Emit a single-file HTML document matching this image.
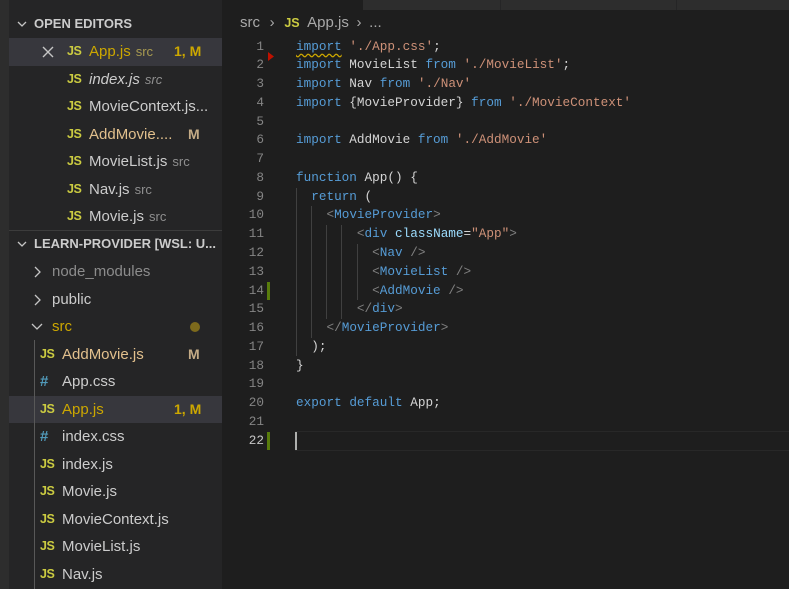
<!DOCTYPE html>
<html><head><meta charset="utf-8"><style>
*{margin:0;padding:0;box-sizing:border-box}
body{width:789px;height:589px;overflow:hidden;background:#1e1e1e;position:relative;font-family:"Liberation Sans",sans-serif}
.strip{position:absolute;left:0;top:0;width:9px;height:589px;background:#2d2d2d}
.side{position:absolute;left:9px;top:0;width:213px;height:589px;background:#252526}
.hdr{position:absolute;left:0;font-weight:bold;font-size:13px;color:#cccccc;height:20px;line-height:20px}
.chev{position:absolute}
.row{position:absolute;left:0;width:213px;height:27.5px;line-height:27.5px;font-size:15px;color:#cccccc;white-space:nowrap}
.sel{background:#37373d}
.js{position:absolute;font-weight:bold;font-size:12.5px;color:#cbcb41;letter-spacing:-0.5px}
.hash{position:absolute;font-weight:bold;font-size:15px;color:#519aba}
.desc{font-size:13px;color:#8f8f8f;margin-left:5px}
.nm{position:absolute}
.badge{position:absolute;font-weight:bold;font-size:14px}
.editor{position:absolute;left:222px;top:0;width:567px;height:589px;background:#1e1e1e}
.tabs{position:absolute;left:141px;top:0;width:426px;height:10px;background:#2d2d2d}
.code{position:absolute;font-family:"Liberation Mono",monospace;font-size:12.7px;white-space:pre;line-height:18.76px}
.ln{color:#858585;text-align:right;width:42px;left:0;top:37.6px}
.src{left:74px;top:37.6px;color:#d4d4d4}
.k{color:#569cd6}.s{color:#ce9178}.v{color:#9cdcfe}.t{color:#808080}.f{color:#dcdcaa}
.g{position:absolute;width:1px;background:#404040}
</style></head><body>
<div class="strip"></div>
<div class="side">
 <svg class="chev" style="left:7px;top:18px" width="12" height="12"><path d="M2 4 L6 8 L10 4" stroke="#c5c5c5" fill="none" stroke-width="1.3"/></svg>
 <div class="hdr" style="left:25px;top:14px">OPEN EDITORS</div>
 <div class="row sel" style="top:38px"><svg style="position:absolute;left:33px;top:8px" width="12" height="12"><path d="M1 1L11 11M11 1L1 11" stroke="#c5c5c5" stroke-width="1.4"/></svg><span class="js" style="left:58px">JS</span><span class="nm" style="left:80px;color:#cca700">App.js<span class="desc" style="color:#a89a50">src</span></span><span class="badge" style="left:165px;color:#cca700">1, M</span></div>
 <div class="row" style="top:65.5px"><span class="js" style="left:58px">JS</span><span class="nm" style="left:80px;font-style:italic">index.js<span class="desc" style="font-style:italic">src</span></span></div>
 <div class="row" style="top:93px"><span class="js" style="left:58px">JS</span><span class="nm" style="left:80px">MovieContext.js...</span></div>
 <div class="row" style="top:120.5px"><span class="js" style="left:58px">JS</span><span class="nm" style="left:80px;color:#e2c08d">AddMovie....</span><span class="badge" style="left:179px;color:#c4ab86">M</span></div>
 <div class="row" style="top:148px"><span class="js" style="left:58px">JS</span><span class="nm" style="left:80px">MovieList.js<span class="desc">src</span></span></div>
 <div class="row" style="top:175.5px"><span class="js" style="left:58px">JS</span><span class="nm" style="left:80px">Nav.js<span class="desc">src</span></span></div>
 <div class="row" style="top:203px"><span class="js" style="left:58px">JS</span><span class="nm" style="left:80px">Movie.js<span class="desc">src</span></span></div>
 <div style="position:absolute;left:0;top:230px;width:213px;height:1px;background:#3c3c3c"></div>
 <svg class="chev" style="left:7px;top:238px" width="12" height="12"><path d="M2 4 L6 8 L10 4" stroke="#c5c5c5" fill="none" stroke-width="1.3"/></svg>
 <div class="hdr" style="left:25px;top:234px">LEARN-PROVIDER [WSL: U...</div>
 <div class="row" style="top:258px"><svg style="position:absolute;left:24px;top:8px" width="10" height="12"><path d="M2 1 L7 6 L2 11" stroke="#c5c5c5" fill="none" stroke-width="1.3"/></svg><span class="nm" style="left:43px;color:#8c8c8c">node_modules</span></div>
 <div class="row" style="top:285.5px"><svg style="position:absolute;left:24px;top:8px" width="10" height="12"><path d="M2 1 L7 6 L2 11" stroke="#c5c5c5" fill="none" stroke-width="1.3"/></svg><span class="nm" style="left:43px">public</span></div>
 <div class="row" style="top:313px"><svg style="position:absolute;left:22px;top:9px" width="12" height="10"><path d="M1 2 L6 7 L11 2" stroke="#c5c5c5" fill="none" stroke-width="1.3"/></svg><span class="nm" style="left:43px;color:#cca700">src</span><span style="position:absolute;left:181px;top:9px;width:10px;height:10px;border-radius:5px;background:#7d6a1c"></span></div>
 <div style="position:absolute;left:25px;top:340px;width:1px;height:249px;background:#585858"></div>
 <div class="row" style="top:340.5px"><span class="js" style="left:31px">JS</span><span class="nm" style="left:53px;color:#e2c08d">AddMovie.js</span><span class="badge" style="left:179px;color:#c4ab86">M</span></div>
 <div class="row" style="top:368px"><span class="hash" style="left:31px">#</span><span class="nm" style="left:53px">App.css</span></div>
 <div class="row sel" style="top:395.5px"><div style="position:absolute;left:25px;top:0;width:1px;height:27.5px;background:#585858"></div><span class="js" style="left:31px">JS</span><span class="nm" style="left:53px;color:#cca700">App.js</span><span class="badge" style="left:165px;color:#cca700">1, M</span></div>
 <div class="row" style="top:423px"><span class="hash" style="left:31px">#</span><span class="nm" style="left:53px">index.css</span></div>
 <div class="row" style="top:450.5px"><span class="js" style="left:31px">JS</span><span class="nm" style="left:53px">index.js</span></div>
 <div class="row" style="top:478px"><span class="js" style="left:31px">JS</span><span class="nm" style="left:53px">Movie.js</span></div>
 <div class="row" style="top:505.5px"><span class="js" style="left:31px">JS</span><span class="nm" style="left:53px">MovieContext.js</span></div>
 <div class="row" style="top:533px"><span class="js" style="left:31px">JS</span><span class="nm" style="left:53px">MovieList.js</span></div>
 <div class="row" style="top:560.5px"><span class="js" style="left:31px">JS</span><span class="nm" style="left:53px">Nav.js</span></div>
</div>
<div class="editor">
 <div class="tabs"><div style="position:absolute;left:137px;top:0;width:1px;height:10px;background:#252526"></div><div style="position:absolute;left:313px;top:0;width:1px;height:10px;background:#252526"></div></div>
 <div style="position:absolute;left:18px;top:14px;font-size:15px;color:#a9a9a9;white-space:nowrap">src <span style="display:inline-block;width:16px;text-align:center">&#x203A;</span> <span style="font-weight:bold;font-size:12.5px;color:#cbcb41">JS</span>&nbsp; App.js <span style="display:inline-block;width:12px;text-align:center">&#x203A;</span> ...</div>
 <svg style="position:absolute;left:46px;top:52px" width="6" height="9"><path d="M0 0 L6 4.5 L0 9Z" fill="#be1100"/></svg>
 <div style="position:absolute;left:45px;top:282px;width:3px;height:18px;background:#587c0c"></div>
 <div style="position:absolute;left:45px;top:432px;width:3px;height:18px;background:#587c0c"></div>
 <div style="position:absolute;left:73px;top:431px;width:494px;height:20px;border-top:1px solid #282828;border-bottom:1px solid #282828"></div>
 <div style="position:absolute;left:73px;top:432px;width:2px;height:18px;background:#aeafad"></div>
 <div class="g" style="left:74px;top:187.7px;height:168.8px"></div>
 <div class="g" style="left:89px;top:206.4px;height:131.3px"></div>
 <div class="g" style="left:104px;top:225.2px;height:93.8px"></div>
 <div class="g" style="left:119px;top:225.2px;height:93.8px"></div>
 <div class="g" style="left:135px;top:243.9px;height:56.3px"></div>
 <div class="code ln">1
2
3
4
5
6
7
8
9
10
11
12
13
14
15
16
17
18
19
20
21
<span style="color:#c6c6c6">22</span></div>
 <div class="code src"><span class="k" style="text-decoration:underline wavy #cca700;text-underline-offset:3px">import</span> <span class="s">'./App.css'</span>;
<span class="k">import</span> MovieList <span class="k">from</span> <span class="s">'./MovieList'</span>;
<span class="k">import</span> Nav <span class="k">from</span> <span class="s">'./Nav'</span>
<span class="k">import</span> {MovieProvider} <span class="k">from</span> <span class="s">'./MovieContext'</span>

<span class="k">import</span> AddMovie <span class="k">from</span> <span class="s">'./AddMovie'</span>

<span class="k">function</span> App() {
  <span class="k">return</span> (
    <span class="t">&lt;</span><span class="k">MovieProvider</span><span class="t">&gt;</span>
        <span class="t">&lt;</span><span class="k">div</span> <span class="v">className</span>=<span class="s">"App"</span><span class="t">&gt;</span>
          <span class="t">&lt;</span><span class="k">Nav</span> <span class="t">/&gt;</span>
          <span class="t">&lt;</span><span class="k">MovieList</span> <span class="t">/&gt;</span>
          <span class="t">&lt;</span><span class="k">AddMovie</span> <span class="t">/&gt;</span>
        <span class="t">&lt;/</span><span class="k">div</span><span class="t">&gt;</span>
    <span class="t">&lt;/</span><span class="k">MovieProvider</span><span class="t">&gt;</span>
  );
}

<span class="k">export</span> <span class="k">default</span> App;
</div>
</div>
</body></html>
